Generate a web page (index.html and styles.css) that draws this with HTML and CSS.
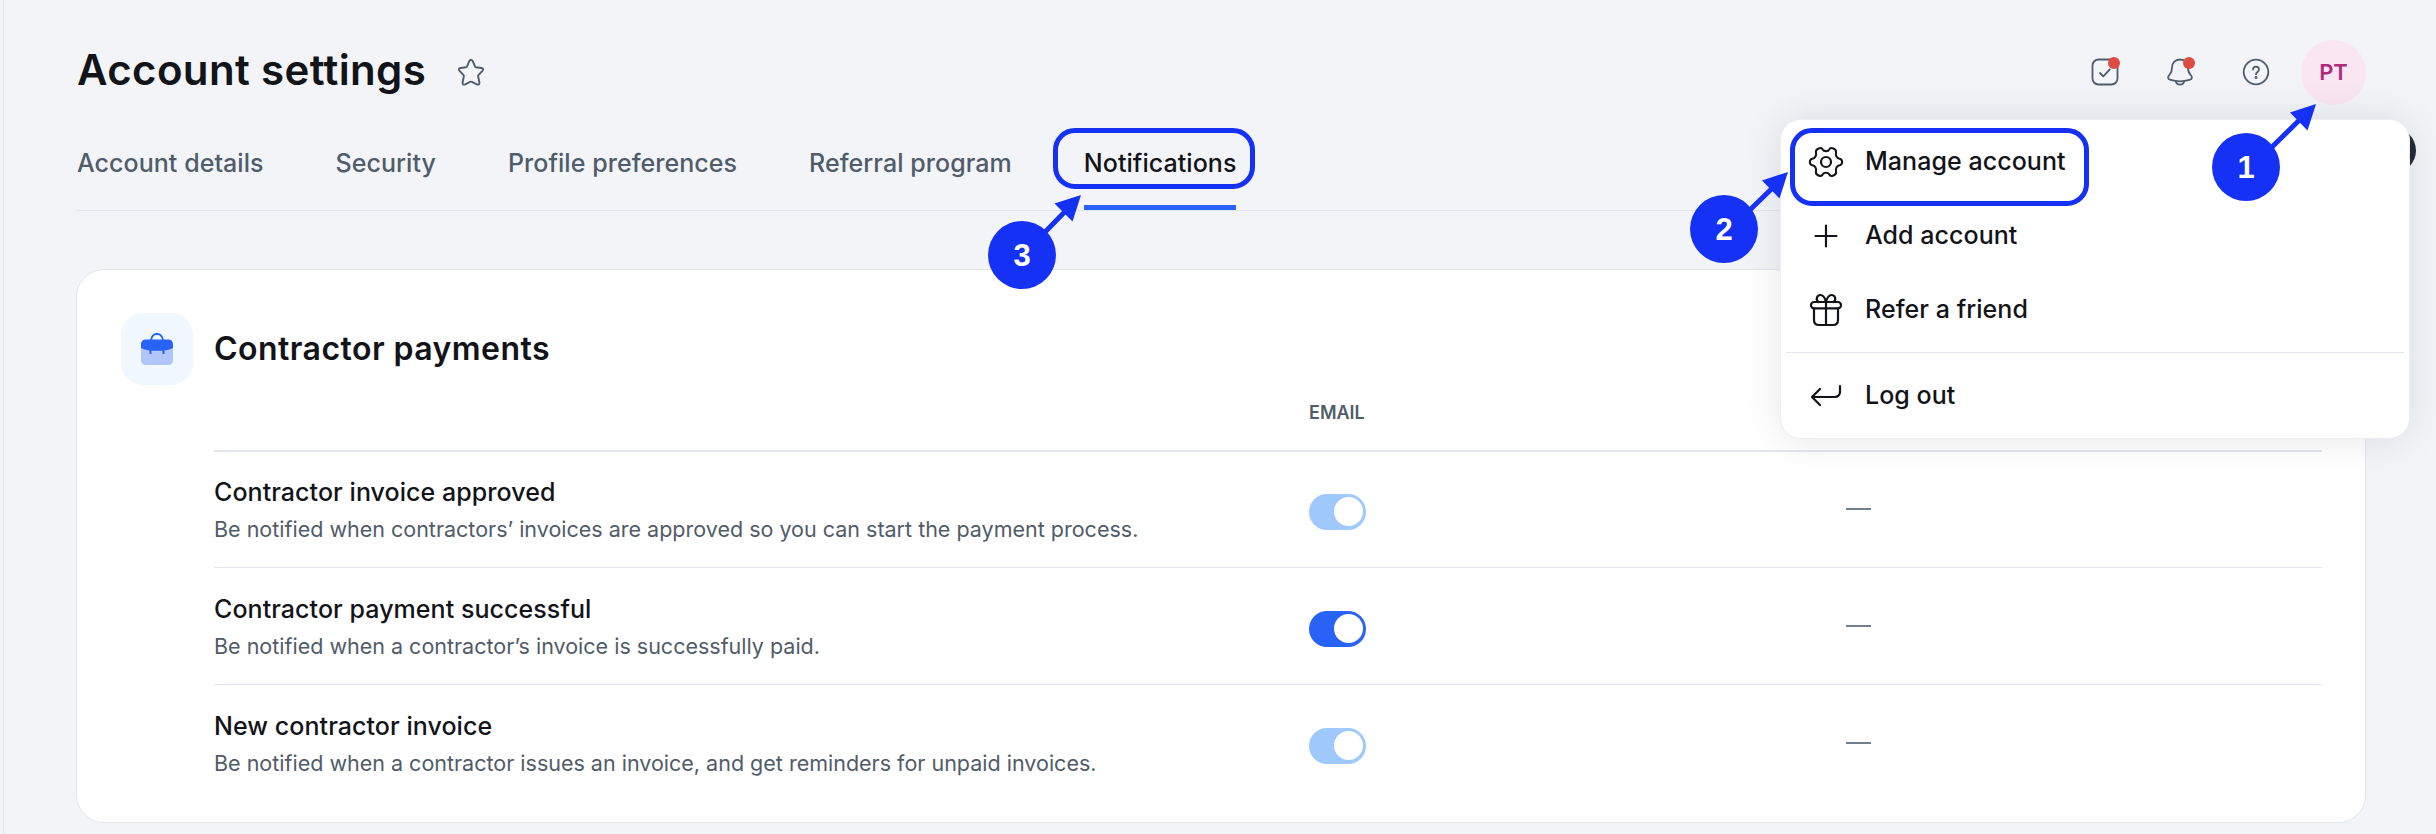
FILE: index.html
```html
<!DOCTYPE html>
<html lang="en">
<head>
    <meta charset="UTF-8">
    <meta name="viewport" content="width=device-width, initial-scale=1.0">
    <title>Account settings</title>
    <link rel="stylesheet" href="styles.css">
</head>
<body>

    <div class="page">
        <!-- Page header -->
        <header class="header">
            <h1>Account settings</h1>
            <svg class="star" viewBox="0 0 30 32" fill="none"><path d="M13.2 3.3Q15 .5 16.8 3.3L19.4 9.3Q19.8 10 20.6 10.2L26.7 11Q29.6 11.7 27.6 14.2L23.2 18.9Q22.7 19.5 22.9 20.3L24.3 27Q24.4 30.2 21.4 29L16 26.3Q15 25.8 14 26.3L8.6 29Q5.6 30.2 5.7 27L7.1 20.3Q7.3 19.5 6.8 18.9L2.4 14.2Q.4 11.7 3.3 11L9.4 10.2Q10.2 10 10.6 9.3Z"/></svg>
            <div class="actions">
                <div class="action">
                    <svg viewBox="0 0 30 30" fill="none"><rect x="2.5" y="2.5" width="25" height="25" rx="6"/><path d="M10 16l3.300 3.300 6.500-7"/></svg>
                    <span class="dot"></span>
                </div>
                <div class="action">
                    <svg viewBox="0 0 30 30" fill="none"><path d="M15 2.500c-5 0-8 3.500-8 8 0 4-.8 5.500-2.400 7.200-2.400 2.400-2 4.300 1 5.200 5.800 1.700 13 1.700 18.800 0 3-.9 3.400-2.800 1-5.200-1.600-1.700-2.400-3.200-2.400-7.200 0-4.500-3-8-8-8zM10.500 24c1.500 4.800 7.500 4.800 9 0"/></svg>
                    <span class="dot"></span>
                </div>
                <div class="action">
                    <svg viewBox="0 0 30 30" fill="none"><circle cx="15" cy="15" r="12.300"/><path d="M12 12.600c0-4 6-4 6 0 0 2.400-3 2.200-3 4.600"/><circle cx="15" cy="20.500" r=".6"/></svg>
                </div>
                <div class="avatar">PT</div>
            </div>
        </header>

        <nav class="tabs">
            <a>Account details</a>
            <a>Security</a>
            <a>Profile preferences</a>
            <a>Referral program</a>
            <a class="active">Notifications</a>
        </nav>

        <!-- Notification settings -->
        <section class="card">
            <div class="card-icon">
                <svg viewBox="0 0 32 32"><path d="M0 14h32v13q0 5-5 5H5q-5 0-5-5z" fill="#b1c5fb"/><path d="M5 6.500h22q5 0 5 5V15q-3 1.800-8.500 2.500V21h-2v-3.300H10.500V21h-2v-3.500Q3 16.800 0 15v-3.500q0-5 5-5z" fill="#2962f6"/><path d="M10 7.500C10.500-1.200 21.500-1.200 22 7.500" fill="none" stroke="#2962f6" stroke-width="2"/></svg>
            </div>
            <div class="card-body">
                <h2>Contractor payments</h2>
                <div class="row-head">
                    <span></span>
                    <span>EMAIL</span>
                    <span></span>
                </div>
                <div class="row">
                    <div>
                        <h3>Contractor invoice approved</h3>
                        <p>Be notified when contractors’ invoices are approved so you can start the payment process.</p>
                    </div>
                    <span class="toggle disabled"></span>
                    <span class="dash"></span>
                </div>
                <div class="row">
                    <div>
                        <h3>Contractor payment successful</h3>
                        <p>Be notified when a contractor’s invoice is successfully paid.</p>
                    </div>
                    <span class="toggle"></span>
                    <span class="dash"></span>
                </div>
                <div class="row">
                    <div>
                        <h3>New contractor invoice</h3>
                        <p>Be notified when a contractor issues an invoice, and get reminders for unpaid invoices.</p>
                    </div>
                    <span class="toggle disabled"></span>
                    <span class="dash"></span>
                </div>
            </div>
        </section>
    </div>

    <div class="bubble"></div>

    <!-- Account menu -->
    <div class="menu">
        <div class="menu-item">
            <svg viewBox="0 0 38 38" fill="none"><path d="M15.400 5.400c1.200 2.400 6 2.400 7.200 0 1.400-3.200 8.200-.8 7.300 3.400-.9 3.200 1.200 6.200 3.900 6.700 3.700.8 3.700 6.200 0 7-2.700.5-4.800 3.500-3.900 6.700.9 4.200-5.900 6.600-7.300 3.400-1.200-2.400-6-2.400-7.200 0-1.400 3.200-8.200.8-7.300-3.400.9-3.200-1.200-6.200-3.900-6.700-3.700-.8-3.700-6.200 0-7 2.700-.5 4.800-3.500 3.900-6.700-.9-4.200 5.900-6.600 7.300-3.400z" transform="translate(1.500 1.500) scale(.92)"/><circle cx="19" cy="19" r="5"/></svg>
            <span>Manage account</span>
        </div>
        <div class="menu-item">
            <svg viewBox="0 0 38 38" fill="none"><path d="M19 8.500v21M8.500 19h21"/></svg>
            <span>Add account</span>
        </div>
        <div class="menu-item">
            <svg viewBox="0 0 38 38" fill="none"><rect x="4" y="11" width="30" height="6.300" rx="3.100"/><path d="M7 17.500V29q0 5 5 5h14q5 0 5-5V17.500M19 11v23M19 11c-1-4-2.400-7-5.500-7-4 0-5 5-2 7M19 11c1-4 2.400-7 5.500-7 4 0 5 5 2 7"/></svg>
            <span>Refer a friend</span>
        </div>
        <div class="menu-divider"></div>
        <div class="menu-item">
            <svg viewBox="0 0 38 38" fill="none"><path d="M33 9v5.500q0 5.500-5.500 5.500H5.500M13 12l-8 8 8 8"/></svg>
            <span>Log out</span>
        </div>
    </div>

    <!-- Step markers over the page -->
    <div class="frame frame-menu"></div>
    <div class="frame frame-tab"></div>
    <svg class="arrows" viewBox="0 0 2436 834">
        <path d="M2246.300 172.300L2301 118.500M1724.500 234.500L1773 187.500M1022.500 255.300L1066 210.500" fill="none"/>
        <path d="M2316 104l-8.500 26.500-17.500-18zM1788 172l-8.500 26.500-17.500-18zM1081 195l-8.500 26.500-18-18z" stroke="none"/>
    </svg>
    <div class="step step-1">1</div>
    <div class="step step-2">2</div>
    <div class="step step-3">3</div>

</body>
</html>
```
FILE: styles.css
```css
* {
    box-sizing: border-box;
}

html, body {
    height: 100%;
    margin: 0;
    overflow: hidden;
}

body {
    position: relative;
    font-family: Inter, "Liberation Sans", sans-serif;
    background-color: #f2f4f8;
    color: #121419;
}

h1, h2, h3, p {
    margin: 0;
}

.page {
    height: 100%;
    margin-left: 3px;
    padding: 39px 70px 0 72px;
    border-left: 1px solid #e2e6ec;
}

/* Header */
.header {
    display: flex;
    align-items: center;
    height: 66px;
}

h1 {
    margin-bottom: 4px;
    padding-left: 1px;
    font-size: 42px;
    font-weight: 600;
    line-height: 50px;
    letter-spacing: 0.35px;
}

.star {
    width: 28px;
    height: 29px;
    margin-left: 31px;
}

.star, .action svg {
    stroke: #505c69;
    stroke-width: 1.8;
    stroke-linecap: round;
    stroke-linejoin: round;
}

.star {
    stroke-width: 2.1;
}

.actions {
    display: flex;
    align-items: center;
    margin-left: auto;
}

.action {
    position: relative;
    width: 30px;
    height: 30px;
    margin-right: 46px;
}

.action:first-child {
    margin-right: 45px;
}

.action:nth-child(3) {
    margin-right: 30px;
}

.action svg {
    display: block;
    width: 30px;
    height: 30px;
}

.dot {
    position: absolute;
    top: 0;
    right: 0;
    width: 12px;
    height: 12px;
    border-radius: 50%;
    background-color: #df4a42;
}

.avatar {
    width: 65px;
    height: 65px;
    border-radius: 50%;
    background-color: #f9e6f2;
    color: #b02a7c;
    font-size: 22px;
    font-weight: 600;
    line-height: 65px;
    text-align: center;
}

/* Tabs */
.tabs {
    display: flex;
    gap: 72px;
    height: 106px;
    padding: 43px 0 0 1px;
    border-bottom: 1px solid #e2e6ec;
}

.tabs a {
    height: 62px;
    color: #505c69;
    font-size: 25px;
    font-weight: 500;
    line-height: 30px;
    letter-spacing: 0.05px;
    white-space: nowrap;
}

.tabs .active {
    color: #121419;
    border-bottom: 5px solid #2962f6;
}

/* Card */
.card {
    display: flex;
    height: 554px;
    margin-top: 58px;
    padding: 43px 43px 0 44px;
    background-color: #fff;
    border: 1px solid #e2e6ec;
    border-radius: 28px;
}

.card-icon {
    display: flex;
    align-items: center;
    justify-content: center;
    width: 72px;
    height: 72px;
    border-radius: 22px;
    background-color: #f0f7ff;
}

.card-icon svg {
    width: 32px;
    height: 32px;
}

.card-body {
    flex: 1;
    margin-left: 21px;
}

h2 {
    height: 72px;
    font-size: 32px;
    font-weight: 600;
    line-height: 71px;
    letter-spacing: 0.45px;
}

.row, .row-head {
    display: grid;
    grid-template-columns: 1095px 537px 1fr;
}

.row {
    height: 117px;
    padding-top: 27px;
    border-top: 1px solid #e2e6ec;
}

.row-head {
    height: 65px;
    padding-top: 17px;
    color: #505c69;
    font-size: 18px;
    font-weight: 600;
    line-height: 22px;
}

.row-head + .row {
    padding-top: 26px;
    border-top-width: 2px;
}

h3 {
    font-size: 25px;
    font-weight: 500;
    line-height: 28px;
    letter-spacing: 0.06px;
}

.row p {
    margin-top: 9px;
    color: #505c69;
    font-size: 21.5px;
    line-height: 28px;
}

.toggle {
    width: 57px;
    height: 36px;
    margin-top: 16px;
    padding: 3px;
    border-radius: 18px;
    background-color: #2962f6;
}

.toggle::after {
    content: "";
    display: block;
    width: 29px;
    height: 29px;
    margin-left: auto;
    border-radius: 50%;
    background-color: #fff;
}

.toggle.disabled {
    background-color: #9fc8fc;
}

.dash {
    width: 25px;
    height: 2px;
    margin-top: 30px;
    background-color: #727f90;
}

/* Dark button half hidden behind the menu */
.bubble {
    position: absolute;
    top: 128px;
    left: 2371px;
    width: 45px;
    height: 45px;
    border-radius: 50%;
    background-color: #222d36;
}

/* Account menu */
.menu {
    position: absolute;
    top: 119px;
    left: 1780px;
    width: 630px;
    height: 320px;
    padding: 5px;
    background-color: #fff;
    border: 1px solid #eceef3;
    border-radius: 21px;
    box-shadow: 0 0 40px rgba(18, 20, 25, 0.1);
}

.menu-item {
    display: flex;
    align-items: center;
    gap: 20px;
    height: 74px;
    padding-left: 21px;
    font-size: 25px;
    font-weight: 500;
    letter-spacing: 0.05px;
}

.menu-item span {
    margin-bottom: 2px;
}

.menu-item svg {
    width: 38px;
    height: 38px;
    stroke: #121419;
    stroke-width: 2.2;
    stroke-linecap: round;
    stroke-linejoin: round;
}

.menu-divider {
    height: 1px;
    margin: 5px 0 6px;
    background-color: #e2e6ec;
}

/* Step markers */
.frame {
    position: absolute;
    border: 5px solid #1531f5;
    border-radius: 22px;
}

.frame-menu {
    top: 128px;
    left: 1790px;
    width: 299px;
    height: 78px;
}

.frame-tab {
    top: 128px;
    left: 1053px;
    width: 202px;
    height: 61px;
}

.arrows {
    position: absolute;
    top: 0;
    left: 0;
    width: 2436px;
    height: 834px;
    fill: #1531f5;
    stroke: #1531f5;
    stroke-width: 5;
}

.step {
    position: absolute;
    width: 68px;
    height: 68px;
    border-radius: 50%;
    background-color: #1531f5;
    color: #fff;
    font-family: "Liberation Sans", sans-serif;
    font-size: 31px;
    font-weight: bold;
    line-height: 70px;
    text-align: center;
}

.step-1 {
    top: 133px;
    left: 2212px;
}

.step-2 {
    top: 195px;
    left: 1690px;
}

.step-3 {
    top: 221px;
    left: 988px;
}
```
